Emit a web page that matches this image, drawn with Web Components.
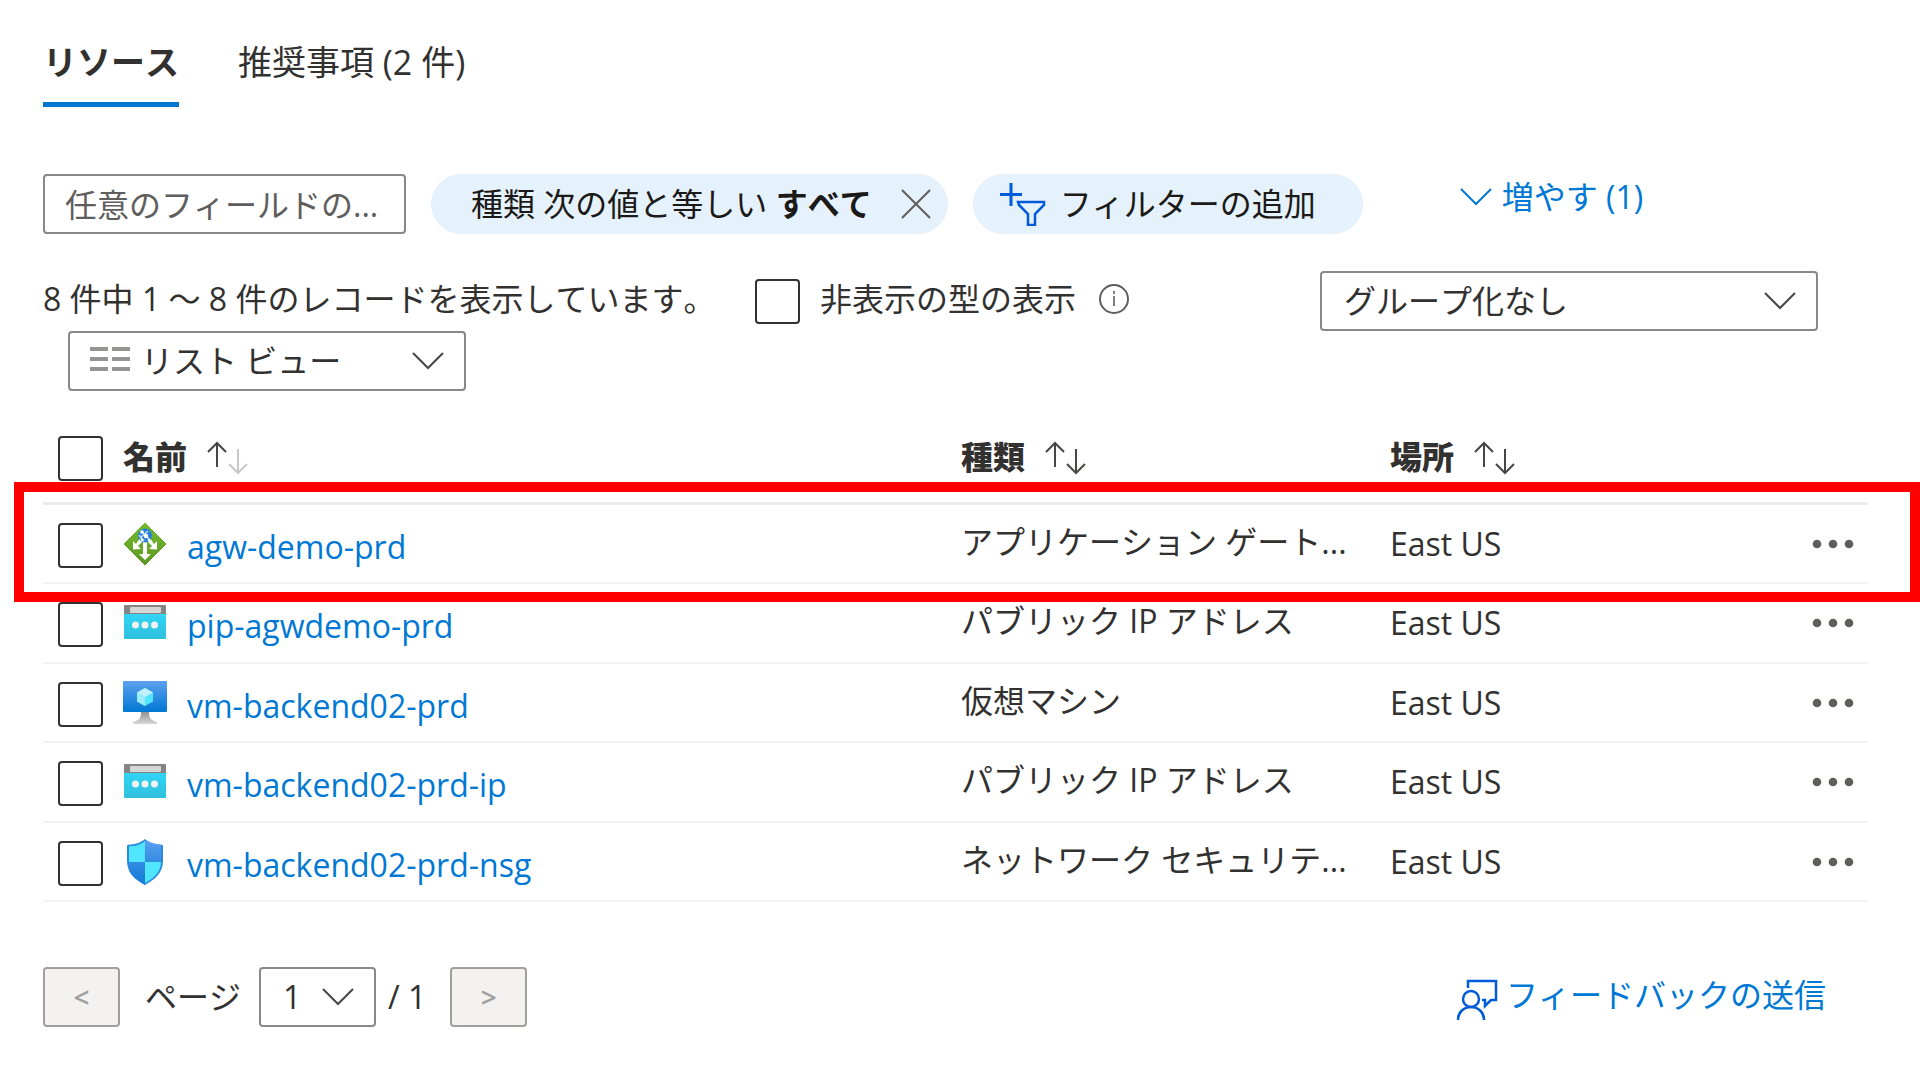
<!DOCTYPE html>
<html lang="ja">
<head>
<meta charset="utf-8">
<title>リソース</title>
<style>
    body {
        margin: 0;
        background: #fff;
        color: #323130;
        font: 32px/46px "Open Sans", "Noto Sans CJK JP", sans-serif;
        font-kerning: none;
    }
</style>
</head>
<body>
<resource-page></resource-page>

<script>
const ICONS = {
    gateway: `<svg width="44" height="44" viewBox="0 0 44 44">
        <defs><linearGradient id="g" x1="0" y1="0" x2="0" y2="1"><stop offset="0" stop-color="#76bc2d"/><stop offset="1" stop-color="#5e9624"/></linearGradient></defs>
        <path d="M22 1 43 22 22 43 1 22Z" fill="url(#g)" stroke="url(#g)" stroke-linejoin="round"/>
        <path d="M20 19h4v13h4l-6 6-6-6h4z" fill="#fff"/>
        <path d="m17 16 3 3-5 5 3 3-8 .5V19l3 3zM27 16l-3 3 5 5-3 3 8 .5V19l-3 3z" fill="#fff"/>
        <circle cx="22" cy="13.500" r="7" fill="#2b7fd6"/>
        <path d="m18 9 9 9M17 16l8-7M16 13l5 6" stroke="#c9e6ff" stroke-width="1.300" fill="none"/>
        <circle cx="19" cy="10" r="1.800" fill="#fff"/><circle cx="23" cy="14" r="2.200" fill="#fff"/><circle cx="19" cy="18" r="1.400" fill="#fff"/><circle cx="26" cy="18" r="1.300" fill="#fff"/>
    </svg>`,
    ip: `<svg width="44" height="44" viewBox="0 0 44 44">
        <defs><linearGradient id="g" x1="0" y1="0" x2="0" y2="1"><stop offset="0" stop-color="#32d4f5"/><stop offset="1" stop-color="#2ec0dd"/></linearGradient></defs>
        <path d="M1 13h42v24a1 1 0 0 1-1 1H2a1 1 0 0 1-1-1z" fill="url(#g)"/>
        <path d="M2 4h40a1 1 0 0 1 1 1v8H1V5a1 1 0 0 1 1-1z" fill="#858585"/>
        <rect x="7" y="6" width="31" height="6" rx="1" fill="#d6d6d6"/>
        <g fill="#f2f2f2"><circle cx="12.500" cy="24" r="3.500"/><circle cx="22" cy="24" r="3.500"/><circle cx="31.500" cy="24" r="3.500"/></g>
    </svg>`,
    vm: `<svg width="44" height="44" viewBox="0 0 44 44">
        <defs>
            <linearGradient id="g" x1="0" y1="0" x2="0" y2="1"><stop offset="0" stop-color="#5ea0ef"/><stop offset="1" stop-color="#0078d4"/></linearGradient>
            <linearGradient id="s" x1="0" y1="0" x2="0" y2="1"><stop offset="0" stop-color="#8c8c8c"/><stop offset="1" stop-color="#d8d8d8"/></linearGradient>
        </defs>
        <path d="M18 30h8c0 7 1 9 8 11v2H10v-2c7-2 8-4 8-11z" fill="url(#s)"/>
        <rect width="44" height="31" rx="1" fill="url(#g)"/>
        <path d="m22 7 8 4.500v9L22 25l-8-4.500v-9z" fill="#50e6ff"/>
        <path d="m22 7 8 4.500-8 4.500-8-4.500z" fill="#c3f1ff"/>
        <path d="M22 16v9l-8-4.500v-9z" fill="#9cebff"/>
    </svg>`,
    nsg: `<svg width="44" height="46" viewBox="0 0 44 44" preserveAspectRatio="none">
        <defs>
            <clipPath id="c"><path d="M22 0c5 4 10 5 16.500 5.500 1 0 1.500.5 1.500 1.500v14c0 12-9 18-18 23C13 39 4 33 4 21V7c0-1 .5-1.500 1.500-1.500C12 5 17 4 22 0z"/></clipPath>
            <linearGradient id="g" x1="0" y1="0" x2="0" y2="44" gradientUnits="userSpaceOnUse"><stop offset="0" stop-color="#5ea0ef"/><stop offset=".8" stop-color="#1b80dc"/></linearGradient>
        </defs>
        <g clip-path="url(#c)">
            <path d="M0 0h44v44H0z" fill="#2b8ae0"/>
            <path d="M22 2h16v20H22zM6 22h16v22H6z" fill="url(#g)"/>
            <path d="M6 7c6 0 11-1 16-5v20H6zM22 22h16c0 10-8 16-16 20z" fill="#50e6ff"/>
        </g>
    </svg>`,
    chevron: `<svg width="32" height="20" viewBox="0 0 32 20"><path d="m1 2 15 15L31 2" fill="none" stroke="currentColor" stroke-width="2"/></svg>`,
    close: `<svg width="32" height="32" viewBox="0 0 32 32"><path d="m2 2 28 28M30 2 2 30" stroke="#605e5c" stroke-width="2"/></svg>`,
    filter: `<svg width="46" height="44" viewBox="0 0 46 44"><path d="M11 1v23M0 12.500h22" stroke="#015cda" stroke-width="3"/><path d="M18 20h26v3l-9 9v11h-7V32l-9-9z" fill="none" stroke="#015cda" stroke-width="2.500"/></svg>`,
    info: `<svg width="32" height="32" viewBox="0 0 32 32"><circle cx="16" cy="16" r="14" fill="none" stroke="#605e5c" stroke-width="2"/><path d="M16 13v10M16 8v3" stroke="#807e7c" stroke-width="2"/></svg>`,
    list: `<svg width="40" height="28" viewBox="0 0 40 28"><path d="M0 2h18M22 2h18M0 12h18M22 12h18M0 22h18M22 22h18" stroke="#979593" stroke-width="4"/></svg>`,
    sort: `<svg width="42" height="36" viewBox="0 0 42 36"><g fill="none" stroke="#484644" stroke-width="2"><path d="M10 28V4M1 13l9-9 9 9"/><path class="down" d="M31 10v24M22 25l9 9 9-9"/></g></svg>`,
    more: `<svg width="42" height="10" viewBox="0 0 42 10"><g fill="#605e5c"><circle cx="5" cy="5" r="4.300"/><circle cx="21" cy="5" r="4.300"/><circle cx="37" cy="5" r="4.300"/></g></svg>`,
    feedback: `<svg width="42" height="42" viewBox="0 0 42 42"><g fill="none" stroke="#015cda" stroke-width="2.500"><circle cx="15" cy="20" r="8"/><path d="M2 41c0-8 6-13 13-13s13 5 13 13M12 9V2h28v19h-5l-6 6v-6h-3"/></g></svg>`
};

class AzIcon extends HTMLElement {
    constructor() {
        super();
        this.attachShadow({ mode: "open" });
        this.shadowRoot.innerHTML = `
            <style>
                :host { display: inline-flex; flex: none; }
                svg { display: block; }
                .down { opacity: var(--down-opacity, 1); }
            </style>
            ${ICONS[this.getAttribute("name")]}
        `;
    }
}

class AzCheckbox extends HTMLElement {
    constructor() {
        super();
        this.attachShadow({ mode: "open" });
        this.shadowRoot.innerHTML = `
            <style>
                :host { display: inline-flex; }
                label { display: flex; align-items: center; gap: 20px; }
                span { padding-bottom: 4px; }
                span:empty { display: none; }
                input {
                    appearance: none;
                    flex: none;
                    box-sizing: border-box;
                    width: 45px;
                    height: 45px;
                    margin: 0;
                    border: 2px solid #323130;
                    border-radius: 4px;
                    background: #fff;
                }
                input:checked { background: #0078d4; }
            </style>
            <label><input type="checkbox" aria-label="${this.getAttribute("label") || ""}"><span><slot></slot></span></label>
        `;
        if (!this.hasAttribute("label")) {
            this.shadowRoot.querySelector("input").removeAttribute("aria-label");
        }
    }
}

class AzDropdown extends HTMLElement {
    constructor() {
        super();
        this.attachShadow({ mode: "open" });
        this.shadowRoot.innerHTML = `
            <style>
                :host {
                    display: grid;
                    grid-template-columns: auto 1fr auto;
                    align-items: center;
                    box-sizing: border-box;
                    height: 60px;
                    padding-right: 22px;
                }
                select {
                    grid-area: 1 / 1 / 2 / 4;
                    appearance: none;
                    box-sizing: border-box;
                    height: 60px;
                    margin: 0 -22px 0 0;
                    padding: 0 0 0 var(--select-indent, 22px);
                    border: 2px solid #8a8886;
                    border-radius: 4px;
                    background: #fff;
                    color: inherit;
                    font: inherit;
                }
                slot, az-icon { pointer-events: none; z-index: 1; }
                ::slotted(az-icon) { grid-area: 1 / 1; margin-left: 22px; z-index: 1; }
                az-icon { grid-area: 1 / 3; color: #484644; }
            </style>
            <select aria-label="${this.getAttribute("label")}"><option>${this.getAttribute("value")}</option></select>
            <slot></slot>
            <az-icon name="chevron"></az-icon>
        `;
    }
}

class AzTabs extends HTMLElement {
    constructor() {
        super();
        this.attachShadow({ mode: "open" });
        this.shadowRoot.innerHTML = `
            <style>
                :host { display: flex; gap: 59px; }
                button {
                    padding: 39px 0 17px;
                    border: 0;
                    border-bottom: 5px solid transparent;
                    background: none;
                    color: inherit;
                    font: inherit;
                    font-kerning: inherit;
                    font-size: 34px;
                }
                button.active { border-color: #0078d4; font-weight: 700; }
            </style>
            <button class="active" role="tab" aria-selected="true">リソース</button>
            <button role="tab">推奨事項 (2 件)</button>
        `;
    }
}

class FilterBar extends HTMLElement {
    constructor() {
        super();
        this.attachShadow({ mode: "open" });
        this.shadowRoot.innerHTML = `
            <style>
                :host { display: flex; align-items: center; gap: 25px; }
                input {
                    box-sizing: border-box;
                    width: 363px;
                    height: 60px;
                    padding: 0 20px;
                    border: 2px solid #8a8886;
                    border-radius: 4px;
                    font: inherit;
                }
                input::placeholder { color: #605e5c; opacity: 1; }
                .pill {
                    display: flex;
                    align-items: center;
                    box-sizing: border-box;
                    height: 60px;
                    border-radius: 30px;
                    background: #e5f1fb;
                    color: #1b1a19;
                }
                button {
                    padding: 0;
                    border: 0;
                    background: none;
                    color: inherit;
                    font: inherit;
                    font-kerning: none;
                }
                .type { gap: 28px; padding: 0 16px 0 40px; }
                .close { display: flex; }
                .add { gap: 14px; padding: 0 47px 0 27px; }
                a {
                    display: flex;
                    align-items: center;
                    align-self: flex-start;
                    gap: 10px;
                    margin-left: 72px;
                    color: #0078d4;
                    text-decoration: none;
                }
            </style>
            <input type="text" placeholder="任意のフィールドの..." aria-label="フィルター">
            <div class="pill type">
                <button>種類 次の値と等しい <b>すべて</b></button>
                <button class="close" aria-label="削除"><az-icon name="close"></az-icon></button>
            </div>
            <button class="pill add"><az-icon name="filter"></az-icon>フィルターの追加</button>
            <a href="#"><az-icon name="chevron"></az-icon>増やす (1)</a>
        `;
    }
}

class ViewBar extends HTMLElement {
    constructor() {
        super();
        this.attachShadow({ mode: "open" });
        this.shadowRoot.innerHTML = `
            <style>
                :host { display: block; }
                .row { display: flex; align-items: center; padding-right: 50px; }
                .count { min-width: 712px; padding-bottom: 4px; }
                .info { margin-left: 22px; padding-bottom: 4px; }
                .group { width: 498px; margin-left: auto; }
                .view { width: 398px; margin-left: 25px; --select-indent: 71px; }
            </style>
            <div class="row">
                <span class="count">8 件中 1 ～ 8 件のレコードを表示しています。</span>
                <az-checkbox>非表示の型の表示</az-checkbox>
                <az-icon class="info" name="info"></az-icon>
                <az-dropdown class="group" label="グループ化" value="グループ化なし"></az-dropdown>
            </div>
            <az-dropdown class="view" label="ビュー" value="リスト ビュー"><az-icon name="list"></az-icon></az-dropdown>
        `;
    }
}

class ResourceTable extends HTMLElement {
    constructor() {
        super();
        this.attachShadow({ mode: "open" });

        const rows = [
            ["gateway", "agw-demo-prd", "アプリケーション ゲート..."],
            ["ip", "pip-agwdemo-prd", "パブリック IP アドレス"],
            ["vm", "vm-backend02-prd", "仮想マシン"],
            ["ip", "vm-backend02-prd-ip", "パブリック IP アドレス"],
            ["nsg", "vm-backend02-prd-nsg", "ネットワーク セキュリテ..."]
        ];

        this.shadowRoot.innerHTML = `
            <style>
                :host { display: block; position: relative; }
                table { width: 100%; table-layout: fixed; border-collapse: separate; border-spacing: 0; }
                th, td {
                    box-sizing: border-box;
                    height: 79px;
                    padding: 0;
                    border-bottom: 2px solid #f3f2f1;
                    text-align: left;
                    white-space: nowrap;
                }
                tr:nth-child(even) td { height: 80px; }
                th { height: 93px; border-bottom: 3px solid #edebe9; }
                .check { width: 80px; padding-left: 15px; }
                .type { width: 429px; }
                .location { width: 349px; }
                .menu { width: 129px; padding-right: 14px; }
                .menu button { display: flex; margin-left: auto; }
                az-checkbox, az-icon { vertical-align: middle; }
                .sort { display: flex; align-items: center; gap: 20px; }
                .sorted { --down-opacity: 0.3; }
                .name { display: flex; align-items: center; gap: 20px; }
                .kind { padding-bottom: 4px; }
                a { padding-top: 6px; color: #0078d4; text-decoration: none; }
                button { padding: 0; border: 0; background: none; color: inherit; font: inherit; }
                /* red frame round the first row */
                .frame {
                    position: absolute;
                    top: 70px;
                    left: -29px;
                    right: -52px;
                    box-sizing: border-box;
                    height: 120px;
                    border: 10px solid #f00;
                    pointer-events: none;
                }
            </style>
            <table>
                <thead>
                    <tr>
                        <th class="check"><az-checkbox label="すべて選択"></az-checkbox></th>
                        <th><button class="sort sorted"><b>名前</b><az-icon name="sort"></az-icon></button></th>
                        <th class="type"><button class="sort"><b>種類</b><az-icon name="sort"></az-icon></button></th>
                        <th class="location"><button class="sort"><b>場所</b><az-icon name="sort"></az-icon></button></th>
                        <th class="menu"></th>
                    </tr>
                </thead>
                <tbody>
                    ${rows.map(([icon, name, type]) => `
                        <tr>
                            <td class="check"><az-checkbox label="${name}"></az-checkbox></td>
                            <td><div class="name"><az-icon name="${icon}"></az-icon><a href="#">${name}</a></div></td>
                            <td class="kind">${type}</td>
                            <td>East US</td>
                            <td class="menu"><button aria-label="メニュー"><az-icon name="more"></az-icon></button></td>
                        </tr>
                    `).join("")}
                </tbody>
            </table>
            <div class="frame"></div>
        `;
    }
}

class PageFooter extends HTMLElement {
    constructor() {
        super();
        this.attachShadow({ mode: "open" });
        this.shadowRoot.innerHTML = `
            <style>
                :host { display: flex; justify-content: space-between; align-items: center; }
                nav { display: flex; align-items: center; }
                button {
                    box-sizing: border-box;
                    width: 77px;
                    height: 60px;
                    padding: 0;
                    border: 2px solid #a19f9d;
                    border-radius: 4px;
                    background: #f3f2f1;
                    color: #a19f9d;
                    font: inherit;
                    font-size: 28px;
                    font-weight: 600;
                }
                .label { margin: 0 18px 0 25px; }
                az-dropdown { width: 117px; }
                .total { margin: 0 24px 0 12px; }
                a {
                    display: flex;
                    align-items: center;
                    gap: 8px;
                    margin: 0 42px 4px 0;
                    color: #0078d4;
                    text-decoration: none;
                }
                a az-icon { padding-top: 10px; }
            </style>
            <nav>
                <button disabled aria-label="前へ">&lt;</button>
                <span class="label">ページ</span>
                <az-dropdown label="ページ" value="1"></az-dropdown>
                <span class="total">/ 1</span>
                <button disabled aria-label="次へ">&gt;</button>
            </nav>
            <a href="#"><az-icon name="feedback"></az-icon>フィードバックの送信</a>
        `;
    }
}

class ResourcePage extends HTMLElement {
    constructor() {
        super();
        this.attachShadow({ mode: "open" });
        this.shadowRoot.innerHTML = `
            <style>
                :host { display: block; padding: 0 52px 40px 43px; }
                filter-bar { margin-top: 67px; }
                view-bar { margin-top: 37px; }
                resource-table { margin-top: 21px; }
                page-footer { margin-top: 65px; }
            </style>
            <az-tabs></az-tabs>
            <filter-bar></filter-bar>
            <view-bar></view-bar>
            <resource-table></resource-table>
            <page-footer></page-footer>
        `;
    }
}

customElements.define("az-icon", AzIcon);
customElements.define("az-checkbox", AzCheckbox);
customElements.define("az-dropdown", AzDropdown);
customElements.define("az-tabs", AzTabs);
customElements.define("filter-bar", FilterBar);
customElements.define("view-bar", ViewBar);
customElements.define("resource-table", ResourceTable);
customElements.define("page-footer", PageFooter);
customElements.define("resource-page", ResourcePage);
</script>
</body>
</html>
